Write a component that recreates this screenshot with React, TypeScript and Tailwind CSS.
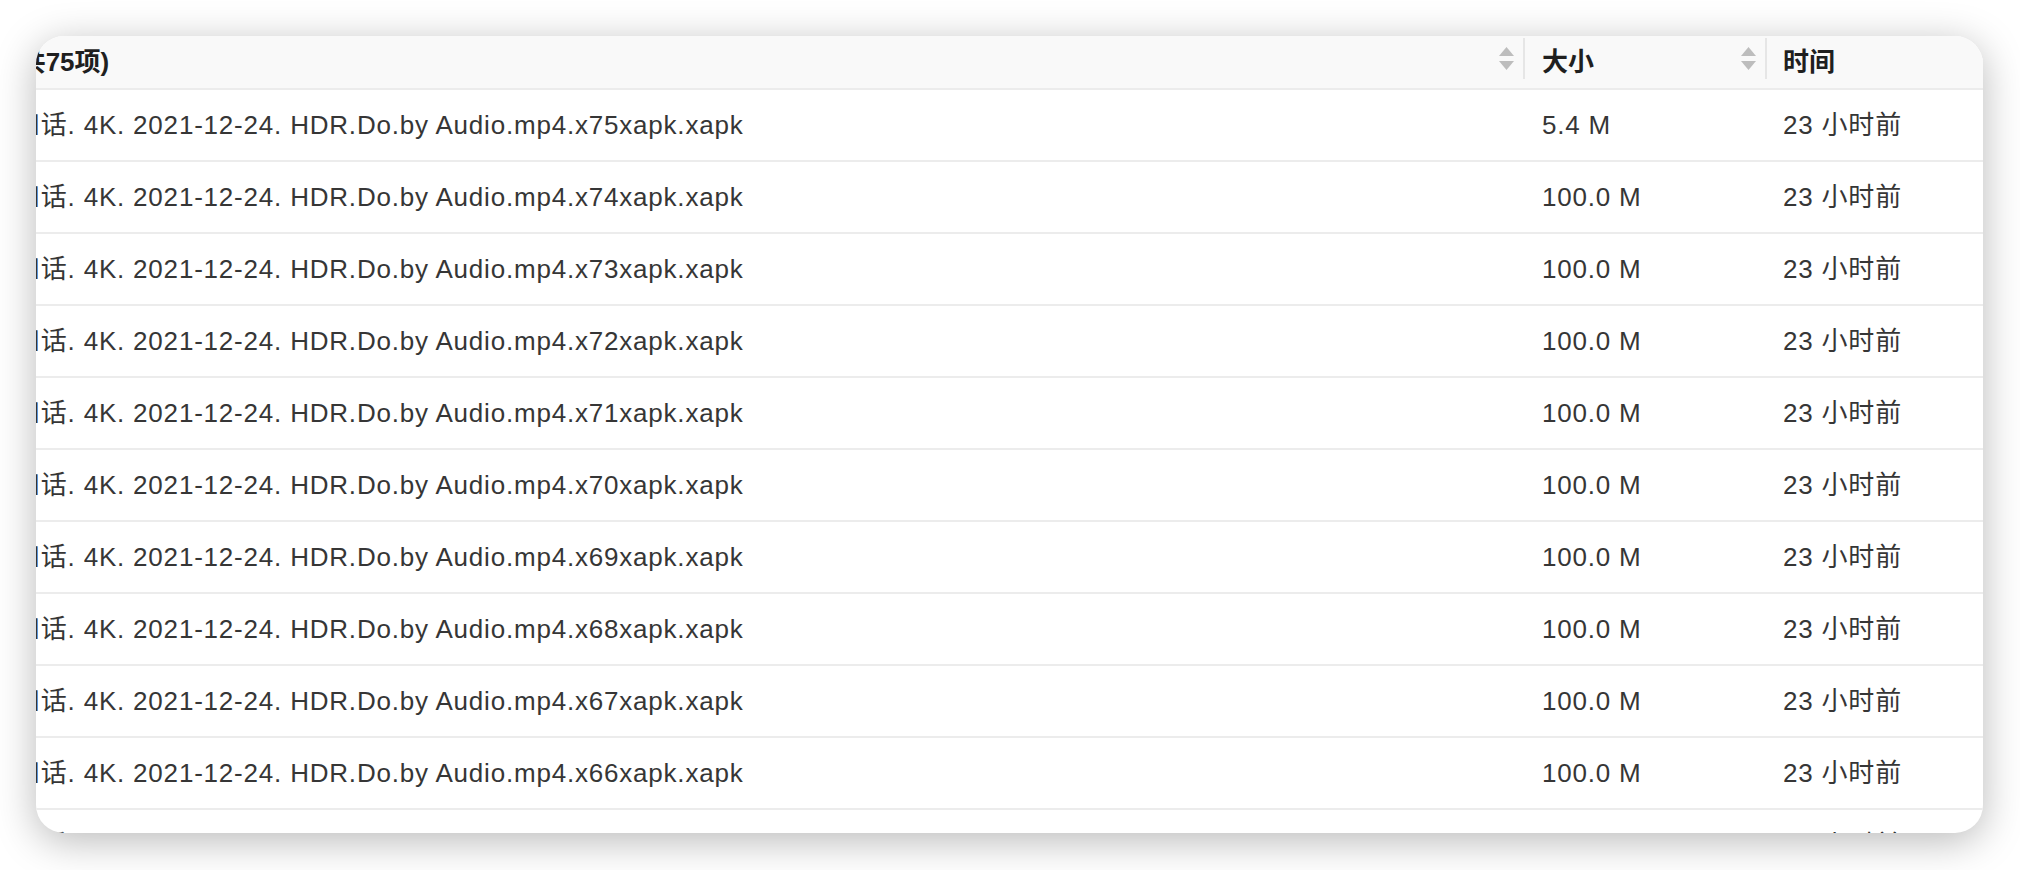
const files = Array.from({ length: 11 }, (_, i) => ({
  name: `和话. 4K. 2021-12-24. HDR.Do.by Audio.mp4.x${75 - i}xapk.xapk`,
  size: i === 0 ? '5.4 M' : '100.0 M',
  time: '23 小时前',
}));

function SortIcon() {
  return (
    <svg width="15" height="24" viewBox="0 0 15 24" className="mb-[6px] shrink-0">
      <path d="M7.5 0 L15 9 L0 9 Z" fill="#bdbdbd" />
      <path d="M0 14 L15 14 L7.5 23 Z" fill="#bdbdbd" />
    </svg>
  );
}

export default function App() {
  return (
    <div
      className="w-[2020px] h-[870px] bg-white pt-[36px] pl-[36px]"
      style={{ fontFamily: '"Liberation Sans", "Noto Sans CJK SC", sans-serif' }}
    >
      <div className="w-[1947px] h-[797px] bg-white rounded-[28px] overflow-hidden shadow-[0_8px_40px_rgba(0,0,0,0.28)] flex flex-col">
        {/* header */}
        <div className="flex h-[54px] shrink-0 bg-[#f9f9f9] border-b-2 border-[#ececec] text-[26px] font-semibold text-[#1f1f1f]">
          <div className="w-[1487px] flex items-center justify-between pr-[9px] overflow-hidden whitespace-nowrap">
            <span className="inline-block -ml-[25px]">(共75项)</span>
            <SortIcon />
          </div>
          <div className="w-[2px] h-[41px] mt-[2px] bg-[#e6e6e6]" />
          <div className="w-[240px] flex items-center justify-between pl-[17px] pr-[9px]">
            <span>大小</span>
            <SortIcon />
          </div>
          <div className="w-[2px] h-[41px] mt-[2px] bg-[#e6e6e6]" />
          <div className="flex-1 flex items-center pl-[16px]">
            <span>时间</span>
          </div>
        </div>

        {/* rows */}
        {files.map((f, i) => (
          <div
            key={i}
            className="flex h-[72px] shrink-0 border-b-2 border-[#ececec] text-[26px] text-[#363636] tracking-[0.8px]"
          >
            <div className="w-[1489px] flex items-center overflow-hidden whitespace-nowrap">
              <span className="inline-block -ml-[22px]">{f.name}</span>
            </div>
            <div className="w-[242px] flex items-center pl-[17px]">{f.size}</div>
            <div className="flex-1 flex items-center pl-[16px]">{f.time}</div>
          </div>
        ))}
      </div>
    </div>
  );
}
